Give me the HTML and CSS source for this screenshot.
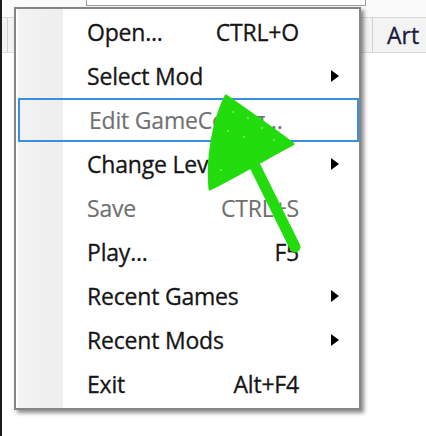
FILE: index.html
```html
<!DOCTYPE html>
<html>
<head>
<meta charset="utf-8">
<link rel="stylesheet" href="styles.css">
</head>
<body>
<div class="app">
  <div class="topstrip"><div class="textbox"></div></div>
  <div class="header">
    <div class="hcell hcell-a"></div>
    <div class="hcell hcell-b"></div>
    <div class="hcell hcell-art">Art</div>
  </div>
  <div class="list"></div>

  <div class="menu">
    <div class="row"><span class="label">Open...</span><span class="key">CTRL+O</span><span class="sub"></span></div>
    <div class="row"><span class="label">Select Mod</span><span class="key"></span><span class="sub arrow"></span></div>
    <div class="row disabled focus"><span class="label">Edit GameConfig...</span><span class="key"></span><span class="sub"></span></div>
    <div class="row"><span class="label">Change Level</span><span class="key"></span><span class="sub arrow"></span></div>
    <div class="row disabled"><span class="label">Save</span><span class="key">CTRL+S</span><span class="sub"></span></div>
    <div class="row"><span class="label">Play...</span><span class="key">F5</span><span class="sub"></span></div>
    <div class="row"><span class="label">Recent Games</span><span class="key"></span><span class="sub arrow"></span></div>
    <div class="row"><span class="label">Recent Mods</span><span class="key"></span><span class="sub arrow"></span></div>
    <div class="row"><span class="label">Exit</span><span class="key">Alt+F4</span><span class="sub"></span></div>
  </div>

  <svg class="scribble" width="426" height="436" viewBox="0 0 426 436">
    <path d="M226,96 C246,110 272,128 293,144 C266,158 240,174 210,189 C207,160 213,122 226,96 Z" fill="#22dc0e" stroke="#22dc0e" stroke-width="3" stroke-linejoin="round"/>
    <path d="M252,160 L295,247" stroke="#22dc0e" stroke-width="11" stroke-linecap="round" fill="none"/>
    <g fill="#7bef6a">
      <circle cx="233" cy="112" r="1"/>
      <circle cx="248" cy="118" r="1"/>
      <circle cx="228" cy="131" r="1"/>
      <circle cx="262" cy="128" r="1"/>
      <circle cx="244" cy="137" r="1"/>
      <circle cx="221" cy="170" r="1"/>
      <circle cx="274" cy="140" r="1"/>
    </g>
  </svg>
</div>
</body>
</html>
```

FILE: styles.css
```css
* { box-sizing: border-box; }

html, body {
  margin: 0;
  padding: 0;
  background: #ffffff;
}

.app {
  position: relative;
  width: 426px;
  height: 436px;
  overflow: hidden;
  border-left: 2px solid #1c1c1c;
  background: #ffffff;
  font-family: "Open Sans", "Noto Sans", "DejaVu Sans", sans-serif;
}

.topstrip {
  height: 17px;
  background: #fafafa;
  padding-left: 84px;
}

.textbox {
  width: 280px;
  height: 6px;
  border: 1px solid #9c9c9c;
  border-top: none;
  background: #ffffff;
}

.header {
  height: 36px;
  display: flex;
  background: #f3f3f3;
  border-top: 1px solid #d6d6d6;
  border-bottom: 1px solid #dcdcdc;
}

.hcell {
  height: 100%;
  border-right: 1px solid #d0d0d0;
}

.hcell-a { width: 6px; }
.hcell-b { width: 365px; }

.hcell-art {
  border-right: none;
  padding-left: 14px;
  font-size: 23px;
  line-height: 34px;
  color: #1a1a40;
  -webkit-text-stroke: 0.3px currentColor;
}

.list {
  height: 383px;
  background: #ffffff;
}

.menu {
  position: absolute;
  left: 12px;
  top: 7px;
  width: 347px;
  height: 403px;
  border: 2px solid #858585;
  padding: 1px 0;
  background:
    linear-gradient(to right, #ffffff 0, #ffffff 2px, #f3f3f3 2px, #eeeeee 47px, #ffffff 47px);
  box-shadow: 3px 3px 4px rgba(0, 0, 0, 0.45);
}

.row {
  height: 44px;
  display: flex;
  align-items: center;
  padding-left: 71px;
  font-size: 23px;
  line-height: 44px;
  color: #161616;
  letter-spacing: -0.2px;
  -webkit-text-stroke: 0.3px currentColor;
}

.row.disabled { color: #707070; -webkit-text-stroke: 0.15px currentColor; }

.row.focus {
  margin: 0 0 0 2px;
  padding-left: 69px;
  width: 341px;
  border: 2px solid #3a8de0;
  line-height: 40px;
}

.label {
  flex: 1;
  white-space: nowrap;
  overflow: hidden;
}

.key {
  margin-right: 32px;
  white-space: nowrap;
}

.sub {
  width: 8px;
  height: 13px;
  margin-right: 20px;
}

.sub.arrow {
  width: 0;
  height: 0;
  margin-right: 20px;
  border-left: 8px solid #000000;
  border-top: 6.5px solid transparent;
  border-bottom: 6.5px solid transparent;
}

.focus .sub { margin-right: 18px; }

.scribble {
  position: absolute;
  left: -2px;
  top: 0;
  pointer-events: none;
}
```
